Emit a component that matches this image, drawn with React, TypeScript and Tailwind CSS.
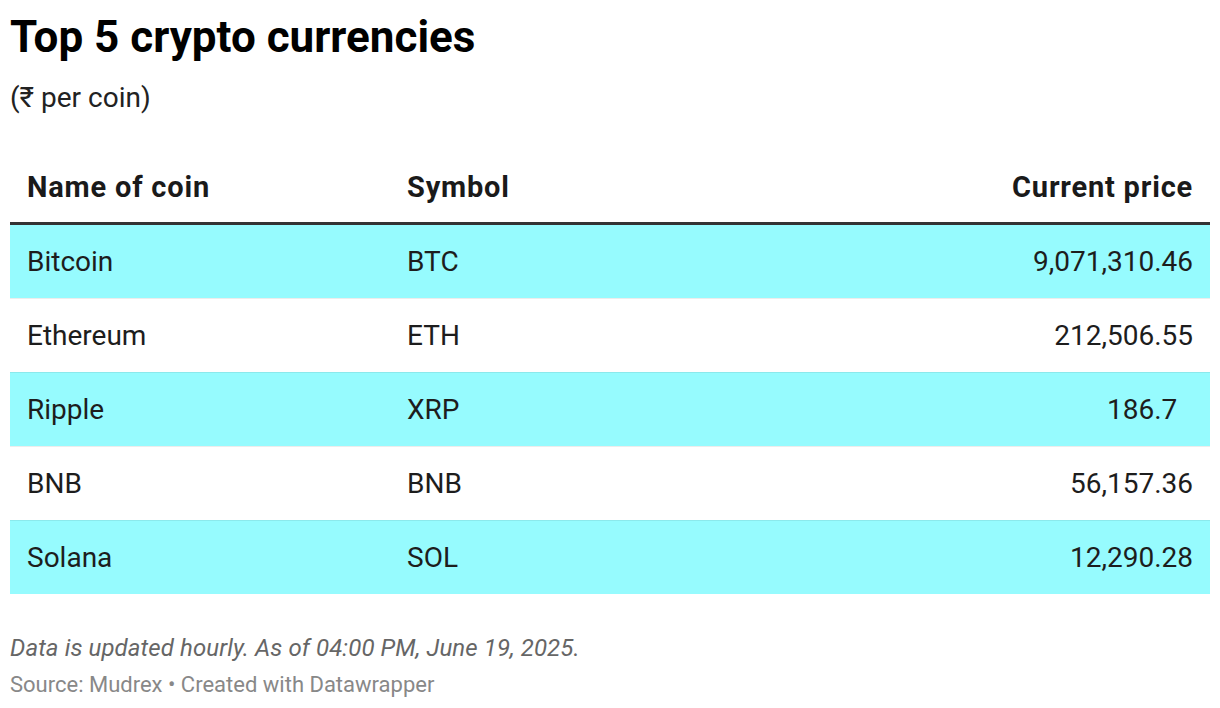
import React from 'react';

const COINS = [
  { name: 'Bitcoin', symbol: 'BTC', price: '9,071,310.46', pad: '', hl: true },
  { name: 'Ethereum', symbol: 'ETH', price: '212,506.55', pad: '', hl: false },
  { name: 'Ripple', symbol: 'XRP', price: '186.7', pad: '0', hl: true },
  { name: 'BNB', symbol: 'BNB', price: '56,157.36', pad: '', hl: false },
  { name: 'Solana', symbol: 'SOL', price: '12,290.28', pad: '', hl: true },
];

const App: React.FC = () => {
  return (
    <div className="w-[1220px] h-[708px] bg-white px-[10px] pt-[13px] text-[#181818] font-['Roboto',sans-serif]">
      {/* Header */}
      <h1 className="text-[44px] font-bold leading-[48px] text-black">Top 5 crypto currencies</h1>
      <p className="mt-[22px] text-[28px] leading-[30px] text-[#222]">(₹ per coin)</p>

      {/* Table */}
      <div className="mt-[56px]">
        <div className="grid grid-cols-[380px_1fr_1fr] items-start h-[56px] pt-[1px] px-[17px] border-b-[3px] border-[#333] text-[29px] leading-[34px] tracking-[0.8px] font-bold text-[#1a1a1a]">
          <span>Name of coin</span>
          <span>Symbol</span>
          <span className="text-right">Current price</span>
        </div>
        {COINS.map((c, i) => (
          <div
            key={c.symbol}
            className={`grid grid-cols-[380px_1fr_1fr] items-center px-[17px] text-[28px] text-[#1d1d1d] ${
              i === 0 ? 'h-[73px]' : 'h-[74px] border-t border-black/[0.07]'
            } ${c.hl ? 'bg-[#96fbfe]' : 'bg-white'}`}
          >
            <span>{c.name}</span>
            <span>{c.symbol}</span>
            <span className="text-right">
              {c.price}
              {c.pad && <span className="invisible">{c.pad}</span>}
            </span>
          </div>
        ))}
      </div>

      {/* Footer */}
      <p className="mt-[40px] text-[24px] leading-[28px] tracking-[0.1px] italic text-[#666]">
        Data is updated hourly. As of 04:00 PM, June 19, 2025.
      </p>
      <p className="mt-[11px] text-[22px] leading-[24px] text-[#888]">Source: Mudrex • Created with Datawrapper</p>
    </div>
  );
};

export default App;
